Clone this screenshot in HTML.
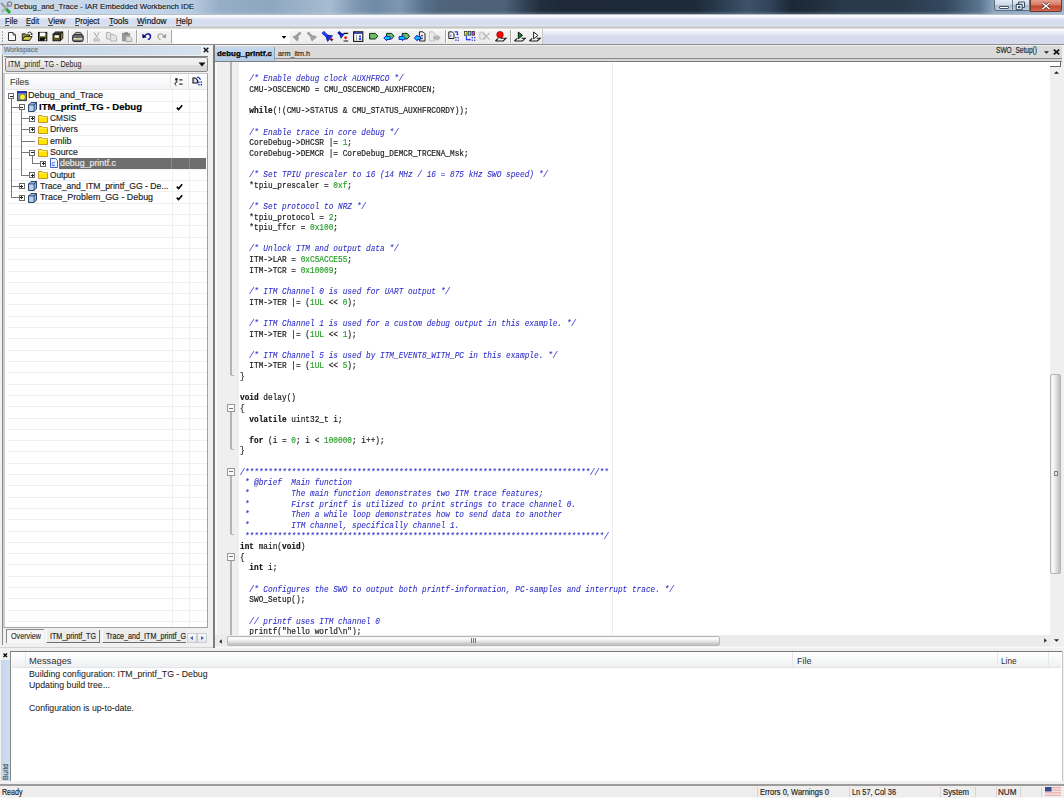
<!DOCTYPE html>
<html><head><meta charset="utf-8"><style>
html,body{margin:0;padding:0;}
body{width:1064px;height:798px;overflow:hidden;position:relative;background:#f0f0f0;font-family:'Liberation Sans', sans-serif;}
#t0{transform:scaleX(0.9707);}
#t1{transform:scaleX(0.9019);}
#t2{transform:scaleX(0.8776);}
#t3{transform:scaleX(0.9467);}
#t4{transform:scaleX(0.9159);}
#t5{transform:scaleX(0.9720);}
#t6{transform:scaleX(0.9647);}
#t7{transform:scaleX(0.9046);}
#t8{transform:scaleX(0.8984);}
#t9{transform:scaleX(0.8731);}
#t10{transform:scaleX(1.0742);}
#t11{transform:scaleX(1.0582);}
#t12{transform:scaleX(1.1120);}
#t13{transform:scaleX(0.9699);}
#t14{transform:scaleX(1.0214);}
#t15{transform:scaleX(1.0415);}
#t16{transform:scaleX(1.0208);}
#t17{transform:scaleX(0.9569);}
#t18{transform:scaleX(1.0281);}
#t19{transform:scaleX(1.0026);}
#t20{transform:scaleX(1.0315);}
#t21{transform:scaleX(0.8791);}
#t22{transform:scaleX(0.8715);}
#t23{transform:scaleX(0.8775);}
#t24{transform:scaleX(1.0156);}
#t25{transform:scaleX(0.8998);}
#t26{transform:scaleX(0.8044);}
#t27{transform:scaleX(1.0600);}
#t28{transform:scaleX(1.0220);}
#t29{transform:scaleX(0.9315);}
#t30{transform:scaleX(0.9947);}
#t31{transform:scaleX(0.9977);}
#t32{transform:scaleX(0.9894);}
#t33{transform:scaleX(0.8465);}
#t34{transform:scaleX(0.9021);}
#t35{transform:scaleX(0.8830);}
#t36{transform:scaleX(0.9306);}
#t37{transform:scaleX(0.9697);}
</style></head><body>
<div style="position:absolute;left:0px;top:0px;width:1064px;height:14px;background:linear-gradient(90deg,#c8d9ec 0px,#c2d5e9 150px,#b4c8de 195px,#95adc6 220px,#8ea7c0 270px,#a7bcd2 330px,#7e98b2 355px,#6f8aa6 375px,#7d97b1 400px,#56708b 425px,#4f647b 440px,#4c6178 505px,#34465a 522px,#222f3f 540px,#1d2938 560px,#1d2a38 695px,#2b3d51 722px,#3d5268 747px,#30435a 770px,#1c2836 792px,#202d3c 812px,#2a3a4c 845px,#2a3a4c 900px,#34485e 945px,#5a7590 980px,#8aa4bc 994px,#9ab2c8 1064px);"></div>
<div style="position:absolute;left:0px;top:11px;width:1064px;height:3px;background:linear-gradient(180deg,rgba(255,255,255,0.0),rgba(200,215,230,0.25));"></div>
<svg style="position:absolute;left:0;top:1px" width="13" height="13" viewBox="0 0 13 13"><path d="M1 2 L10 11" stroke="#9a9a9a" stroke-width="2.2"/><path d="M2 11 L9 3" stroke="#b0b0b0" stroke-width="2"/><circle cx="9.5" cy="3" r="2.2" fill="none" stroke="#888" stroke-width="1.3"/><path d="M6 8 L10 12" stroke="#1faa2a" stroke-width="2.6"/></svg>
<span id="t0" style="position:absolute;left:14px;top:3.00px;font-family:'Liberation Sans', sans-serif;font-size:8px;line-height:8px;color:#1a1a1a;font-weight:normal;white-space:pre;transform-origin:0 0;-webkit-text-stroke:0.15px currentColor;text-shadow:0 0 3px rgba(255,255,255,0.6);">Debug_and_Trace - IAR Embedded Workbench IDE</span>
<div style="position:absolute;left:994px;top:0;width:36px;height:11px;border:1px solid #5f6f82;border-top:none;border-radius:0 0 0 3px;background:linear-gradient(180deg,#e2ebf6 0%,#cfdcea 45%,#a9bcd2 55%,#bfd0e2 100%);box-sizing:border-box;"></div>
<div style="position:absolute;left:1012px;top:0px;width:1px;height:11px;background:#6a7a8c;"></div>
<div style="position:absolute;left:999px;top:5.6px;width:8px;height:1.6px;background:#fff;border:0.8px solid #44546a;box-sizing:content-box;border-radius:1px;"></div>
<svg style="position:absolute;left:1015px;top:1px" width="11" height="10" viewBox="0 0 11 10"><rect x="3.5" y="1" width="6" height="5.5" fill="#f0f4f8" stroke="#3a4a5e" stroke-width="1.1" rx="0.8"/><rect x="1.2" y="3.4" width="6" height="5.5" fill="#f0f4f8" stroke="#3a4a5e" stroke-width="1.1" rx="0.8"/><rect x="3" y="5" width="2.4" height="2.2" fill="#3a4a5e"/></svg>
<div style="position:absolute;left:1030px;top:0;width:31.5px;height:11.5px;border:1px solid #6a3a30;border-top:none;border-radius:0 0 3px 0;background:linear-gradient(180deg,#e7a090 0%,#d77a66 45%,#c3442c 55%,#d4674e 100%);box-sizing:border-box;"></div>
<svg style="position:absolute;left:1041px;top:1.5px" width="10" height="8" viewBox="0 0 10 8"><path d="M1.5 1 L8.5 7 M8.5 1 L1.5 7" stroke="#4a2a24" stroke-width="2.8"/><path d="M1.5 1 L8.5 7 M8.5 1 L1.5 7" stroke="#fff" stroke-width="1.6"/></svg>
<div style="position:absolute;left:0px;top:14px;width:1064px;height:15px;background:linear-gradient(180deg,#8a96a2 0px,#f4f6fa 1.2px,#ffffff 1.8px,#eef1f8 3.5px,#d8dff0 5.5px,#d6ddef 10.5px,#e2e7f4 11.5px,#cccccc 12.6px,#c8c8c8 14.2px,#f8f9fc 15px);"></div>
<span id="t1" style="position:absolute;left:4.5px;top:16.59px;font-family:'Liberation Sans', sans-serif;font-size:8.6px;line-height:8.6px;color:#141414;font-weight:normal;white-space:pre;transform-origin:0 0;-webkit-text-stroke:0.15px currentColor;">File</span>
<span id="t2" style="position:absolute;left:26px;top:16.59px;font-family:'Liberation Sans', sans-serif;font-size:8.6px;line-height:8.6px;color:#141414;font-weight:normal;white-space:pre;transform-origin:0 0;-webkit-text-stroke:0.15px currentColor;">Edit</span>
<span id="t3" style="position:absolute;left:48px;top:16.59px;font-family:'Liberation Sans', sans-serif;font-size:8.6px;line-height:8.6px;color:#141414;font-weight:normal;white-space:pre;transform-origin:0 0;-webkit-text-stroke:0.15px currentColor;">View</span>
<span id="t4" style="position:absolute;left:74.5px;top:16.59px;font-family:'Liberation Sans', sans-serif;font-size:8.6px;line-height:8.6px;color:#141414;font-weight:normal;white-space:pre;transform-origin:0 0;-webkit-text-stroke:0.15px currentColor;">Project</span>
<span id="t5" style="position:absolute;left:108.5px;top:16.59px;font-family:'Liberation Sans', sans-serif;font-size:8.6px;line-height:8.6px;color:#141414;font-weight:normal;white-space:pre;transform-origin:0 0;-webkit-text-stroke:0.15px currentColor;">Tools</span>
<span id="t6" style="position:absolute;left:137px;top:16.59px;font-family:'Liberation Sans', sans-serif;font-size:8.6px;line-height:8.6px;color:#141414;font-weight:normal;white-space:pre;transform-origin:0 0;-webkit-text-stroke:0.15px currentColor;">Window</span>
<span id="t7" style="position:absolute;left:176px;top:16.59px;font-family:'Liberation Sans', sans-serif;font-size:8.6px;line-height:8.6px;color:#141414;font-weight:normal;white-space:pre;transform-origin:0 0;-webkit-text-stroke:0.15px currentColor;">Help</span>
<div style="position:absolute;left:5px;top:24.8px;width:3.5px;height:0.9px;background:#505050;"></div>
<div style="position:absolute;left:26.3px;top:24.8px;width:4px;height:0.9px;background:#505050;"></div>
<div style="position:absolute;left:48.3px;top:24.8px;width:4.5px;height:0.9px;background:#505050;"></div>
<div style="position:absolute;left:75px;top:24.8px;width:4px;height:0.9px;background:#505050;"></div>
<div style="position:absolute;left:108.8px;top:24.8px;width:4px;height:0.9px;background:#505050;"></div>
<div style="position:absolute;left:137.3px;top:24.8px;width:6px;height:0.9px;background:#505050;"></div>
<div style="position:absolute;left:176.3px;top:24.8px;width:4.5px;height:0.9px;background:#505050;"></div>
<div style="position:absolute;left:0px;top:29px;width:1064px;height:15px;background:linear-gradient(180deg,#fdfdfe 0px,#f4f6fb 2px,#dde2f1 6px,#d5daec 8px,#d5daec 15px);"></div>
<div style="position:absolute;left:0px;top:29px;width:543px;height:15px;background:linear-gradient(180deg,#fdfdfd 0px,#f3f3f3 3px,#efefef 12px,#e8e8e8 15px);"></div>
<div style="position:absolute;left:542px;top:29px;width:1px;height:15px;background:#c6c6c6;"></div>
<div style="position:absolute;left:1.5px;top:31px;width:1.5px;height:1.5px;background:#a0a8b8;"></div>
<div style="position:absolute;left:1.5px;top:34px;width:1.5px;height:1.5px;background:#a0a8b8;"></div>
<div style="position:absolute;left:1.5px;top:37px;width:1.5px;height:1.5px;background:#a0a8b8;"></div>
<div style="position:absolute;left:1.5px;top:40px;width:1.5px;height:1.5px;background:#a0a8b8;"></div>
<div style="position:absolute;left:67.5px;top:30px;width:1px;height:12.5px;background:#a8a8a8;"></div>
<div style="position:absolute;left:68.5px;top:30px;width:1px;height:12.5px;background:#ffffff;"></div>
<div style="position:absolute;left:86.5px;top:30px;width:1px;height:12.5px;background:#a8a8a8;"></div>
<div style="position:absolute;left:87.5px;top:30px;width:1px;height:12.5px;background:#ffffff;"></div>
<div style="position:absolute;left:136px;top:30px;width:1px;height:12.5px;background:#a8a8a8;"></div>
<div style="position:absolute;left:137px;top:30px;width:1px;height:12.5px;background:#ffffff;"></div>
<div style="position:absolute;left:171px;top:30px;width:1px;height:12.5px;background:#a8a8a8;"></div>
<div style="position:absolute;left:172px;top:30px;width:1px;height:12.5px;background:#ffffff;"></div>
<div style="position:absolute;left:444.5px;top:30px;width:1px;height:12.5px;background:#a8a8a8;"></div>
<div style="position:absolute;left:445.5px;top:30px;width:1px;height:12.5px;background:#ffffff;"></div>
<div style="position:absolute;left:509.5px;top:30px;width:1px;height:12.5px;background:#a8a8a8;"></div>
<div style="position:absolute;left:510.5px;top:30px;width:1px;height:12.5px;background:#ffffff;"></div>
<div style="position:absolute;left:0px;top:44px;width:1064px;height:1px;background:#8c8c8c;"></div>
<div style="position:absolute;left:0px;top:45px;width:213px;height:602px;background:#f0f0f0;"></div>
<div style="position:absolute;left:2px;top:45px;width:1.3px;height:600px;background:#8a8a8a;"></div>
<div style="position:absolute;left:0px;top:646.6px;width:213.3px;height:1.4px;background:#d2d2d2;"></div>
<div style="position:absolute;left:2px;top:46px;width:199px;height:8.5px;background:linear-gradient(90deg,#c6d7e9,#cddbea 60%,#d6e2ef);"></div>
<div style="position:absolute;left:201px;top:46px;width:7px;height:8.5px;background:#eef2f6;"></div>
<span id="t8" style="position:absolute;left:4px;top:46.14px;font-family:'Liberation Sans', sans-serif;font-size:7.6px;line-height:7.6px;color:#707070;font-weight:normal;white-space:pre;transform-origin:0 0;-webkit-text-stroke:0.15px currentColor;">Workspace</span>
<svg style="position:absolute;left:203px;top:47px" width="6" height="6" viewBox="0 0 6 6"><path d="M0.7 0.7 L5.3 5.3 M5.3 0.7 L0.7 5.3" stroke="#111" stroke-width="1.4"/></svg>
<div style="position:absolute;left:4px;top:55.5px;width:204px;height:1px;background:#808080;"></div>
<div style="position:absolute;left:5px;top:57px;width:203px;height:15px;box-sizing:border-box;border:1px solid #8a8a8a;border-radius:2px;background:linear-gradient(180deg,#f4f4f4 0%,#ececec 50%,#dedede 51%,#d6d6d6 100%);"></div>
<span id="t9" style="position:absolute;left:7.5px;top:61.03px;font-family:'Liberation Sans', sans-serif;font-size:8.2px;line-height:8.2px;color:#1a1a1a;font-weight:normal;white-space:pre;transform-origin:0 0;-webkit-text-stroke:0.15px currentColor;-webkit-text-stroke:0;">ITM_printf_TG - Debug</span>
<svg style="position:absolute;left:198px;top:62px" width="8" height="5" viewBox="0 0 8 5"><path d="M0.5 0.5 L7.5 0.5 L4 4.5 Z" fill="#111"/></svg>
<div style="position:absolute;left:3.3px;top:72.5px;width:204.7px;height:555px;background:#fff;border:1px solid #a0a0a0;border-left:2.7px solid #c8ccd4;border-top:1px solid #c8c8c8;box-sizing:border-box;"></div>
<div style="position:absolute;left:6px;top:73.5px;width:201px;height:16px;background:linear-gradient(180deg,#ffffff,#f3f4f6);border-bottom:1px solid #e4e6ea;box-sizing:border-box;"></div>
<div style="position:absolute;left:170.2px;top:73.5px;width:1px;height:16px;background:#e6e6e6;"></div>
<div style="position:absolute;left:188.1px;top:73.5px;width:1px;height:16px;background:#e6e6e6;"></div>
<span id="t10" style="position:absolute;left:10px;top:78.36px;font-family:'Liberation Sans', sans-serif;font-size:8.4px;line-height:8.4px;color:#4a4a4a;font-weight:normal;white-space:pre;transform-origin:0 0;-webkit-text-stroke:0.15px currentColor;">Files</span>
<svg style="position:absolute;left:168px;top:72px" width="40" height="20" viewBox="168 72 40 20"><circle cx="176.4" cy="79.4" r="1.3" fill="#222"/><path d="M176.4 80.6 V81.6 M177.6 81.8 Q175 81.8 174.8 84.2 L176.4 85.6" fill="none" stroke="#222" stroke-width="1"/><path d="M179.2 79.8 H182.6 M179.2 84.2 H182.6" stroke="#333" stroke-width="1.2"/><path d="M193 78 H195.6 L197.6 80.4 V83 H193 Z" fill="#d8d8f0" stroke="#111" stroke-width="1.1"/><path d="M197 77.3 H198.6 L200.6 79.6" fill="none" stroke="#1a2ae0" stroke-width="1.3"/><rect x="198.2" y="81.4" width="1.4" height="1.5" fill="#2a3ac0"/><rect x="200.6" y="81.4" width="1.4" height="1.5" fill="#2a3ac0"/><rect x="198.2" y="84" width="1.4" height="1.5" fill="#2a3ac0"/><rect x="200.6" y="84" width="1.4" height="1.5" fill="#2a3ac0"/></svg>
<div style="position:absolute;left:7px;top:101.0px;width:200px;height:1px;background:#f0f0f0;"></div>
<div style="position:absolute;left:7px;top:112.3px;width:200px;height:1px;background:#f0f0f0;"></div>
<div style="position:absolute;left:7px;top:123.61px;width:200px;height:1px;background:#f0f0f0;"></div>
<div style="position:absolute;left:7px;top:134.91px;width:200px;height:1px;background:#f0f0f0;"></div>
<div style="position:absolute;left:7px;top:146.22px;width:200px;height:1px;background:#f0f0f0;"></div>
<div style="position:absolute;left:7px;top:157.52px;width:200px;height:1px;background:#f0f0f0;"></div>
<div style="position:absolute;left:7px;top:168.82px;width:200px;height:1px;background:#f0f0f0;"></div>
<div style="position:absolute;left:7px;top:180.13px;width:200px;height:1px;background:#f0f0f0;"></div>
<div style="position:absolute;left:7px;top:191.43px;width:200px;height:1px;background:#f0f0f0;"></div>
<div style="position:absolute;left:7px;top:202.74px;width:200px;height:1px;background:#f0f0f0;"></div>
<div style="position:absolute;left:7px;top:214.04px;width:200px;height:1px;background:#f0f0f0;"></div>
<div style="position:absolute;left:7px;top:225.34px;width:200px;height:1px;background:#f0f0f0;"></div>
<div style="position:absolute;left:7px;top:236.65px;width:200px;height:1px;background:#f0f0f0;"></div>
<div style="position:absolute;left:7px;top:247.95px;width:200px;height:1px;background:#f0f0f0;"></div>
<div style="position:absolute;left:7px;top:259.26px;width:200px;height:1px;background:#f0f0f0;"></div>
<div style="position:absolute;left:7px;top:270.56px;width:200px;height:1px;background:#f0f0f0;"></div>
<div style="position:absolute;left:7px;top:281.86px;width:200px;height:1px;background:#f0f0f0;"></div>
<div style="position:absolute;left:7px;top:293.17px;width:200px;height:1px;background:#f0f0f0;"></div>
<div style="position:absolute;left:7px;top:304.47px;width:200px;height:1px;background:#f0f0f0;"></div>
<div style="position:absolute;left:7px;top:315.78px;width:200px;height:1px;background:#f0f0f0;"></div>
<div style="position:absolute;left:7px;top:327.08px;width:200px;height:1px;background:#f0f0f0;"></div>
<div style="position:absolute;left:7px;top:338.38px;width:200px;height:1px;background:#f0f0f0;"></div>
<div style="position:absolute;left:7px;top:349.69px;width:200px;height:1px;background:#f0f0f0;"></div>
<div style="position:absolute;left:7px;top:360.99px;width:200px;height:1px;background:#f0f0f0;"></div>
<div style="position:absolute;left:7px;top:372.3px;width:200px;height:1px;background:#f0f0f0;"></div>
<div style="position:absolute;left:7px;top:383.6px;width:200px;height:1px;background:#f0f0f0;"></div>
<div style="position:absolute;left:7px;top:394.9px;width:200px;height:1px;background:#f0f0f0;"></div>
<div style="position:absolute;left:7px;top:406.21px;width:200px;height:1px;background:#f0f0f0;"></div>
<div style="position:absolute;left:7px;top:417.51px;width:200px;height:1px;background:#f0f0f0;"></div>
<div style="position:absolute;left:7px;top:428.82px;width:200px;height:1px;background:#f0f0f0;"></div>
<div style="position:absolute;left:7px;top:440.12px;width:200px;height:1px;background:#f0f0f0;"></div>
<div style="position:absolute;left:7px;top:451.42px;width:200px;height:1px;background:#f0f0f0;"></div>
<div style="position:absolute;left:7px;top:462.73px;width:200px;height:1px;background:#f0f0f0;"></div>
<div style="position:absolute;left:7px;top:474.03px;width:200px;height:1px;background:#f0f0f0;"></div>
<div style="position:absolute;left:7px;top:485.34px;width:200px;height:1px;background:#f0f0f0;"></div>
<div style="position:absolute;left:7px;top:496.64px;width:200px;height:1px;background:#f0f0f0;"></div>
<div style="position:absolute;left:7px;top:507.94px;width:200px;height:1px;background:#f0f0f0;"></div>
<div style="position:absolute;left:7px;top:519.25px;width:200px;height:1px;background:#f0f0f0;"></div>
<div style="position:absolute;left:7px;top:530.55px;width:200px;height:1px;background:#f0f0f0;"></div>
<div style="position:absolute;left:7px;top:541.86px;width:200px;height:1px;background:#f0f0f0;"></div>
<div style="position:absolute;left:7px;top:553.16px;width:200px;height:1px;background:#f0f0f0;"></div>
<div style="position:absolute;left:7px;top:564.46px;width:200px;height:1px;background:#f0f0f0;"></div>
<div style="position:absolute;left:7px;top:575.77px;width:200px;height:1px;background:#f0f0f0;"></div>
<div style="position:absolute;left:7px;top:587.07px;width:200px;height:1px;background:#f0f0f0;"></div>
<div style="position:absolute;left:7px;top:598.38px;width:200px;height:1px;background:#f0f0f0;"></div>
<div style="position:absolute;left:7px;top:609.68px;width:200px;height:1px;background:#f0f0f0;"></div>
<div style="position:absolute;left:7px;top:620.98px;width:200px;height:1px;background:#f0f0f0;"></div>
<div style="position:absolute;left:171.5px;top:89.5px;width:1px;height:537px;background:#f0f0f0;"></div>
<div style="position:absolute;left:189px;top:89.5px;width:1px;height:537px;background:#f0f0f0;"></div>
<div style="position:absolute;left:10.5px;top:99.0px;width:1px;height:99.24px;background:#7a7a7a;"></div>
<div style="position:absolute;left:21px;top:110.3px;width:1px;height:65.32px;background:#7a7a7a;"></div>
<div style="position:absolute;left:31.5px;top:155.52px;width:1px;height:8.8px;background:#7a7a7a;"></div>
<div style="position:absolute;left:11px;top:106.8px;width:7.5px;height:1px;background:#7a7a7a;"></div>
<div style="position:absolute;left:11px;top:185.93px;width:7.5px;height:1px;background:#7a7a7a;"></div>
<div style="position:absolute;left:11px;top:197.24px;width:7.5px;height:1px;background:#7a7a7a;"></div>
<div style="position:absolute;left:21.5px;top:118.11px;width:8.0px;height:1px;background:#7a7a7a;"></div>
<div style="position:absolute;left:21.5px;top:129.41px;width:8.0px;height:1px;background:#7a7a7a;"></div>
<div style="position:absolute;left:21.5px;top:140.72px;width:13.5px;height:1px;background:#7a7a7a;"></div>
<div style="position:absolute;left:21.5px;top:152.02px;width:8.0px;height:1px;background:#7a7a7a;"></div>
<div style="position:absolute;left:21.5px;top:174.63px;width:8.0px;height:1px;background:#7a7a7a;"></div>
<div style="position:absolute;left:32px;top:163.32px;width:8px;height:1px;background:#7a7a7a;"></div>
<div style="position:absolute;left:8px;top:93.00px;width:6px;height:6px;box-sizing:border-box;border:1px solid #6a6a6a;background:#fff;"></div>
<div style="position:absolute;left:9.5px;top:95.5px;width:3px;height:1px;background:#222;"></div>
<svg style="position:absolute;left:17px;top:90.50px" width="10" height="10" viewBox="0 0 10 10"><rect x="0.5" y="0.5" width="9" height="9" fill="#7090b0" stroke="#333" stroke-width="0.9"/><rect x="0.5" y="0.5" width="9" height="1.6" fill="#1a2ad0"/><circle cx="5.5" cy="6" r="3" fill="#f6f040" stroke="#555" stroke-width="0.6"/></svg>
<span id="t11" style="position:absolute;left:28px;top:91.39px;font-family:'Liberation Sans', sans-serif;font-size:8.6px;line-height:8.6px;color:#222;font-weight:normal;white-space:pre;transform-origin:0 0;-webkit-text-stroke:0.15px currentColor;">Debug_and_Trace</span>
<div style="position:absolute;left:18.5px;top:104.30px;width:6px;height:6px;box-sizing:border-box;border:1px solid #6a6a6a;background:#fff;"></div>
<div style="position:absolute;left:20.0px;top:106.8px;width:3px;height:1px;background:#222;"></div>
<svg style="position:absolute;left:28px;top:102.30px" width="9" height="10" viewBox="0 0 9 10"><path d="M0.5 3 L3 0.5 H8.5 V7 L6 9.5 H0.5 Z" fill="#8fb4dc" stroke="#203860" stroke-width="0.9"/><path d="M0.5 3 H6 V9.5 M6 3 L8.5 0.5" stroke="#203860" stroke-width="0.9" fill="none"/><rect x="1.2" y="3.6" width="4.2" height="5.2" fill="#b8d2ee"/></svg>
<span id="t12" style="position:absolute;left:38.5px;top:102.69px;font-family:'Liberation Sans', sans-serif;font-size:8.6px;line-height:8.6px;color:#000;font-weight:bold;white-space:pre;transform-origin:0 0;-webkit-text-stroke:0.15px currentColor;">ITM_printf_TG - Debug</span>
<svg style="position:absolute;left:176px;top:103.80px" width="7" height="7" viewBox="0 0 7 7"><path d="M0.8 3.6 L2.6 5.6 L6.2 1.2" stroke="#000" stroke-width="1.6" fill="none"/></svg>
<div style="position:absolute;left:29.2px;top:115.61px;width:6px;height:6px;box-sizing:border-box;border:1px solid #6a6a6a;background:#fff;"></div>
<div style="position:absolute;left:30.7px;top:118.11px;width:3px;height:1px;background:#222;"></div>
<div style="position:absolute;left:31.7px;top:117.11px;width:1px;height:3px;background:#222;"></div>
<svg style="position:absolute;left:38px;top:113.61px" width="10" height="9" viewBox="0 0 10 9"><path d="M0.5 1.5 H4 L5 2.5 H9.5 V8.5 H0.5 Z" fill="#ffe400" stroke="#c08a20" stroke-width="0.9"/><path d="M0.8 3.2 H9.2" stroke="#fff7a0" stroke-width="0.8"/></svg>
<span id="t13" style="position:absolute;left:49.6px;top:114.00px;font-family:'Liberation Sans', sans-serif;font-size:8.6px;line-height:8.6px;color:#222;font-weight:normal;white-space:pre;transform-origin:0 0;-webkit-text-stroke:0.15px currentColor;">CMSIS</span>
<div style="position:absolute;left:29.2px;top:126.91px;width:6px;height:6px;box-sizing:border-box;border:1px solid #6a6a6a;background:#fff;"></div>
<div style="position:absolute;left:30.7px;top:129.41px;width:3px;height:1px;background:#222;"></div>
<div style="position:absolute;left:31.7px;top:128.41px;width:1px;height:3px;background:#222;"></div>
<svg style="position:absolute;left:38px;top:124.91px" width="10" height="9" viewBox="0 0 10 9"><path d="M0.5 1.5 H4 L5 2.5 H9.5 V8.5 H0.5 Z" fill="#ffe400" stroke="#c08a20" stroke-width="0.9"/><path d="M0.8 3.2 H9.2" stroke="#fff7a0" stroke-width="0.8"/></svg>
<span id="t14" style="position:absolute;left:49.6px;top:125.30px;font-family:'Liberation Sans', sans-serif;font-size:8.6px;line-height:8.6px;color:#222;font-weight:normal;white-space:pre;transform-origin:0 0;-webkit-text-stroke:0.15px currentColor;">Drivers</span>
<svg style="position:absolute;left:38px;top:136.22px" width="10" height="9" viewBox="0 0 10 9"><path d="M0.5 1.5 H4 L5 2.5 H9.5 V8.5 H0.5 Z" fill="#ffe400" stroke="#c08a20" stroke-width="0.9"/><path d="M0.8 3.2 H9.2" stroke="#fff7a0" stroke-width="0.8"/></svg>
<span id="t15" style="position:absolute;left:49.6px;top:136.61px;font-family:'Liberation Sans', sans-serif;font-size:8.6px;line-height:8.6px;color:#222;font-weight:normal;white-space:pre;transform-origin:0 0;-webkit-text-stroke:0.15px currentColor;">emlib</span>
<div style="position:absolute;left:29.2px;top:149.52px;width:6px;height:6px;box-sizing:border-box;border:1px solid #6a6a6a;background:#fff;"></div>
<div style="position:absolute;left:30.7px;top:152.02px;width:3px;height:1px;background:#222;"></div>
<svg style="position:absolute;left:38px;top:147.52px" width="10" height="9" viewBox="0 0 10 9"><path d="M0.5 1.5 H4 L5 2.5 H9.5 V8.5 H0.5 Z" fill="#ffe400" stroke="#c08a20" stroke-width="0.9"/><path d="M0.8 3.2 H9.2" stroke="#fff7a0" stroke-width="0.8"/></svg>
<span id="t16" style="position:absolute;left:49.6px;top:147.91px;font-family:'Liberation Sans', sans-serif;font-size:8.6px;line-height:8.6px;color:#222;font-weight:normal;white-space:pre;transform-origin:0 0;-webkit-text-stroke:0.15px currentColor;">Source</span>
<div style="position:absolute;left:29.2px;top:172.13px;width:6px;height:6px;box-sizing:border-box;border:1px solid #6a6a6a;background:#fff;"></div>
<div style="position:absolute;left:30.7px;top:174.63px;width:3px;height:1px;background:#222;"></div>
<div style="position:absolute;left:31.7px;top:173.63px;width:1px;height:3px;background:#222;"></div>
<svg style="position:absolute;left:38px;top:170.13px" width="10" height="9" viewBox="0 0 10 9"><path d="M0.5 1.5 H4 L5 2.5 H9.5 V8.5 H0.5 Z" fill="#ffe400" stroke="#c08a20" stroke-width="0.9"/><path d="M0.8 3.2 H9.2" stroke="#fff7a0" stroke-width="0.8"/></svg>
<span id="t17" style="position:absolute;left:49.6px;top:170.52px;font-family:'Liberation Sans', sans-serif;font-size:8.6px;line-height:8.6px;color:#222;font-weight:normal;white-space:pre;transform-origin:0 0;-webkit-text-stroke:0.15px currentColor;">Output</span>
<div style="position:absolute;left:59.4px;top:158.2px;width:146.6px;height:10.4px;background:#6e6e6e;"></div>
<div style="position:absolute;left:171.2px;top:158.2px;width:1px;height:10.4px;background:#8a8a8a;"></div>
<div style="position:absolute;left:189.2px;top:158.2px;width:1px;height:10.4px;background:#8a8a8a;"></div>
<div style="position:absolute;left:40px;top:160.82px;width:6px;height:6px;box-sizing:border-box;border:1px solid #6a6a6a;background:#fff;"></div>
<div style="position:absolute;left:41.5px;top:163.32px;width:3px;height:1px;background:#222;"></div>
<div style="position:absolute;left:42.5px;top:162.32px;width:1px;height:3px;background:#222;"></div>
<svg style="position:absolute;left:49.5px;top:158.32px" width="8" height="10" viewBox="0 0 8 10"><path d="M0.5 0.5 H5.5 L7.5 2.5 V9.5 H0.5 Z" fill="#eef4ff" stroke="#2a50c0" stroke-width="0.9"/><text x="1.6" y="8.2" font-family="Liberation Sans" font-size="7" fill="#1030ff">c</text></svg>
<span id="t18" style="position:absolute;left:60px;top:159.21px;font-family:'Liberation Sans', sans-serif;font-size:8.6px;line-height:8.6px;color:#ececec;font-weight:normal;white-space:pre;transform-origin:0 0;-webkit-text-stroke:0.15px currentColor;">debug_printf.c</span>
<div style="position:absolute;left:18.5px;top:183.43px;width:6px;height:6px;box-sizing:border-box;border:1px solid #6a6a6a;background:#fff;"></div>
<div style="position:absolute;left:20.0px;top:185.93px;width:3px;height:1px;background:#222;"></div>
<div style="position:absolute;left:21.0px;top:184.93px;width:1px;height:3px;background:#222;"></div>
<svg style="position:absolute;left:28px;top:181.43px" width="9" height="10" viewBox="0 0 9 10"><path d="M0.5 3 L3 0.5 H8.5 V7 L6 9.5 H0.5 Z" fill="#8fb4dc" stroke="#203860" stroke-width="0.9"/><path d="M0.5 3 H6 V9.5 M6 3 L8.5 0.5" stroke="#203860" stroke-width="0.9" fill="none"/><rect x="1.2" y="3.6" width="4.2" height="5.2" fill="#b8d2ee"/></svg>
<span id="t19" style="position:absolute;left:39.5px;top:181.82px;font-family:'Liberation Sans', sans-serif;font-size:8.6px;line-height:8.6px;color:#222;font-weight:normal;white-space:pre;transform-origin:0 0;-webkit-text-stroke:0.15px currentColor;">Trace_and_ITM_printf_GG - De...</span>
<svg style="position:absolute;left:176px;top:182.93px" width="7" height="7" viewBox="0 0 7 7"><path d="M0.8 3.6 L2.6 5.6 L6.2 1.2" stroke="#000" stroke-width="1.6" fill="none"/></svg>
<div style="position:absolute;left:18.5px;top:194.74px;width:6px;height:6px;box-sizing:border-box;border:1px solid #6a6a6a;background:#fff;"></div>
<div style="position:absolute;left:20.0px;top:197.24px;width:3px;height:1px;background:#222;"></div>
<div style="position:absolute;left:21.0px;top:196.24px;width:1px;height:3px;background:#222;"></div>
<svg style="position:absolute;left:28px;top:192.74px" width="9" height="10" viewBox="0 0 9 10"><path d="M0.5 3 L3 0.5 H8.5 V7 L6 9.5 H0.5 Z" fill="#8fb4dc" stroke="#203860" stroke-width="0.9"/><path d="M0.5 3 H6 V9.5 M6 3 L8.5 0.5" stroke="#203860" stroke-width="0.9" fill="none"/><rect x="1.2" y="3.6" width="4.2" height="5.2" fill="#b8d2ee"/></svg>
<span id="t20" style="position:absolute;left:39.5px;top:193.13px;font-family:'Liberation Sans', sans-serif;font-size:8.6px;line-height:8.6px;color:#222;font-weight:normal;white-space:pre;transform-origin:0 0;-webkit-text-stroke:0.15px currentColor;">Trace_Problem_GG - Debug</span>
<svg style="position:absolute;left:176px;top:194.24px" width="7" height="7" viewBox="0 0 7 7"><path d="M0.8 3.6 L2.6 5.6 L6.2 1.2" stroke="#000" stroke-width="1.6" fill="none"/></svg>
<div style="position:absolute;left:5px;top:627px;width:203px;height:1px;background:#a0a0a8;"></div>
<div style="position:absolute;left:6px;top:628.5px;width:37.5px;height:14px;box-sizing:border-box;border-left:1px solid #8a8a8a;border-top:1px solid #8a8a8a;background:#f7f7f7;"></div>
<span id="t21" style="position:absolute;left:10.5px;top:632.93px;font-family:'Liberation Sans', sans-serif;font-size:8.2px;line-height:8.2px;color:#333;font-weight:normal;white-space:pre;transform-origin:0 0;-webkit-text-stroke:0.15px currentColor;">Overview</span>
<div style="position:absolute;left:46px;top:629.5px;width:53.5px;height:13.5px;box-sizing:border-box;border-right:1.5px solid #707070;border-bottom:1.5px solid #707070;border-left:1px solid #fff;background:#ececec;"></div>
<span id="t22" style="position:absolute;left:50px;top:633.23px;font-family:'Liberation Sans', sans-serif;font-size:8.2px;line-height:8.2px;color:#222;font-weight:normal;white-space:pre;transform-origin:0 0;-webkit-text-stroke:0.15px currentColor;">ITM_printf_TG</span>
<div style="position:absolute;left:102px;top:629.5px;width:84px;height:13.5px;box-sizing:border-box;border-bottom:1.5px solid #707070;border-left:1px solid #fff;background:#ececec;overflow:hidden;"></div>
<span id="t23" style="position:absolute;left:106px;top:633.23px;font-family:'Liberation Sans', sans-serif;font-size:8.2px;line-height:8.2px;color:#222;font-weight:normal;white-space:pre;transform-origin:0 0;-webkit-text-stroke:0.15px currentColor;">Trace_and_ITM_printf_G</span>
<div style="position:absolute;left:185.5px;top:629.5px;width:22px;height:13.5px;background:#f0f0f0;"></div>
<div style="position:absolute;left:186.5px;top:632.5px;width:10px;height:10px;box-sizing:border-box;border:1px solid #c8ccd4;background:linear-gradient(180deg,#f8f8f8,#e6e6e6);"></div>
<svg style="position:absolute;left:190.0px;top:635.8px" width="3" height="4" viewBox="0 0 3 4"><path d="M3 0 L0 2 L3 4 Z" fill="#4a64b8"/></svg>
<div style="position:absolute;left:197px;top:632.5px;width:10px;height:10px;box-sizing:border-box;border:1px solid #c8ccd4;background:linear-gradient(180deg,#f8f8f8,#e6e6e6);"></div>
<svg style="position:absolute;left:200.5px;top:635.8px" width="3" height="4" viewBox="0 0 3 4"><path d="M0 0 L3 2 L0 4 Z" fill="#4a64b8"/></svg>
<div style="position:absolute;left:213px;top:44.5px;width:851px;height:603px;background:#f0f0f0;"></div>
<div style="position:absolute;left:213.3px;top:44.5px;width:2px;height:603px;background:#7c7c7c;"></div>
<div style="position:absolute;left:215.3px;top:45.5px;width:848.7px;height:13px;background:#dadada;"></div>
<div style="position:absolute;left:215.3px;top:58.2px;width:848.7px;height:1px;background:#8a8a8a;"></div>
<div style="position:absolute;left:215.3px;top:59.2px;width:848.7px;height:2px;background:#d6d6d6;"></div>
<div style="position:absolute;left:215.3px;top:61px;width:848.7px;height:1px;background:#7e7e7e;"></div>
<div style="position:absolute;left:215.3px;top:46.5px;width:60px;height:14.5px;background:linear-gradient(180deg,#c4d8ee,#b4cce6);border-right:1px solid #8aa0b8;box-sizing:border-box;"></div>
<span id="t24" style="position:absolute;left:217.3px;top:49.97px;font-family:'Liberation Sans', sans-serif;font-size:7.8px;line-height:7.8px;color:#000;font-weight:bold;white-space:pre;transform-origin:0 0;-webkit-text-stroke:0.15px currentColor;-webkit-text-stroke:0.25px #000;">debug_printf.c</span>
<span id="t25" style="position:absolute;left:278px;top:49.80px;font-family:'Liberation Sans', sans-serif;font-size:8.0px;line-height:8.0px;color:#222;font-weight:normal;white-space:pre;transform-origin:0 0;-webkit-text-stroke:0.15px currentColor;">arm_itm.h</span>
<span id="t26" style="position:absolute;left:995.5px;top:47.33px;font-family:'Liberation Sans', sans-serif;font-size:8.2px;line-height:8.2px;color:#222;font-weight:normal;white-space:pre;transform-origin:0 0;-webkit-text-stroke:0.15px currentColor;">SWO_Setup()</span>
<svg style="position:absolute;left:1043.8px;top:50.8px" width="5" height="3" viewBox="0 0 5 3"><path d="M0 0.2 H5 L2.5 2.8 Z" fill="#222"/></svg>
<svg style="position:absolute;left:1053px;top:49.2px" width="7" height="6" viewBox="0 0 7 6"><path d="M0.8 0.6 L6.2 5.4 M6.2 0.6 L0.8 5.4" stroke="#111" stroke-width="1.7"/></svg>
<div style="position:absolute;left:215.3px;top:62px;width:835px;height:573px;background:#fff;"></div>
<div style="position:absolute;left:215.3px;top:62px;width:23.5px;height:573px;background:#efefef;"></div>
<div style="position:absolute;left:215.3px;top:62px;width:1.7px;height:573px;background:#fafafa;"></div>
<div style="position:absolute;left:612px;top:62px;width:1px;height:573px;background:#ececec;"></div>
<div style="position:absolute;left:1050.5px;top:66.5px;width:11.5px;height:578.5px;background:#efefef;"></div>
<div style="position:absolute;left:1050px;top:61px;width:11.3px;height:5.6px;box-sizing:border-box;border:1.5px solid #6a6a6a;border-top:1px solid #7e7e7e;border-left:none;background:#fff"></div>
<svg style="position:absolute;left:1054px;top:71px" width="5" height="3" viewBox="0 0 5 3"><path d="M0 2.8 L2.5 0.2 L5 2.8 Z" fill="#222"/></svg>
<div style="position:absolute;left:1050.3px;top:374px;width:10.7px;height:199.6px;box-sizing:border-box;border:1px solid #b4b4b4;border-radius:2px;background:linear-gradient(90deg,#e8e8e8 0%,#fbfbfb 20%,#e2e2e4 55%,#c8c8cc 85%,#c0c0c4 100%);"></div>
<div style="position:absolute;left:1053.5px;top:470.5px;width:4px;height:5px;box-sizing:border-box;border:0.8px solid #808080;background:#e8e8e8;"></div>
<div style="position:absolute;left:215.3px;top:635px;width:835.2px;height:10.5px;background:#ebebeb;"></div>
<svg style="position:absolute;left:219px;top:638.5px" width="3" height="5" viewBox="0 0 3 5"><path d="M2.8 0.3 L0.2 2.5 L2.8 4.7 Z" fill="#222"/></svg>
<div style="position:absolute;left:227.3px;top:636.3px;width:492.7px;height:9.4px;box-sizing:border-box;border:1px solid #b8b8b8;border-radius:2px;background:linear-gradient(180deg,#f2f2f2 0%,#fdfdfd 20%,#e4e4e6 55%,#c8c8cc 85%,#c2c2c6 100%);"></div>
<div style="position:absolute;left:471px;top:638px;width:0.8px;height:5px;background:#777;"></div>
<div style="position:absolute;left:473px;top:638px;width:0.8px;height:5px;background:#777;"></div>
<div style="position:absolute;left:475px;top:638px;width:0.8px;height:5px;background:#777;"></div>
<svg style="position:absolute;left:1043.5px;top:638.3px" width="3" height="5" viewBox="0 0 3 5"><path d="M0.2 0.3 L2.8 2.5 L0.2 4.7 Z" fill="#222"/></svg>
<svg style="position:absolute;left:1054px;top:639.3px" width="5" height="3" viewBox="0 0 5 3"><path d="M0 0.2 H5 L2.5 2.8 Z" fill="#222"/></svg>
<div style="position:absolute;left:1062px;top:44.5px;width:2px;height:603px;background:#f0f0f0;"></div>
<div style="position:absolute;left:215.3px;top:62px;width:835px;height:573px;overflow:hidden;"><div style="position:absolute;left:24.399999999999977px;top:0;transform:scaleX(0.8839);transform-origin:0 0;font-family:'Liberation Mono', monospace;font-size:8.8px;color:#1c1c1c;-webkit-text-stroke:0.2px currentColor;"><div style="position:absolute;left:0;top:13.41px;white-space:pre;line-height:8.8px">  <span class="cm">/* Enable debug clock AUXHFRCO */</span></div><div style="position:absolute;left:0;top:24.04px;white-space:pre;line-height:8.8px">  CMU-&gt;OSCENCMD = CMU_OSCENCMD_AUXHFRCOEN;</div><div style="position:absolute;left:0;top:34.67px;white-space:pre;line-height:8.8px"></div><div style="position:absolute;left:0;top:45.30px;white-space:pre;line-height:8.8px">  <span class="kw">while</span>(!(CMU-&gt;STATUS &amp; CMU_STATUS_AUXHFRCORDY));</div><div style="position:absolute;left:0;top:55.93px;white-space:pre;line-height:8.8px"></div><div style="position:absolute;left:0;top:66.56px;white-space:pre;line-height:8.8px">  <span class="cm">/* Enable trace in core debug */</span></div><div style="position:absolute;left:0;top:77.19px;white-space:pre;line-height:8.8px">  CoreDebug-&gt;DHCSR |= <span class="nm">1</span>;</div><div style="position:absolute;left:0;top:87.82px;white-space:pre;line-height:8.8px">  CoreDebug-&gt;DEMCR |= CoreDebug_DEMCR_TRCENA_Msk;</div><div style="position:absolute;left:0;top:98.45px;white-space:pre;line-height:8.8px"></div><div style="position:absolute;left:0;top:109.08px;white-space:pre;line-height:8.8px">  <span class="cm">/* Set TPIU prescaler to 16 (14 MHz / 16 = 875 kHz SWO speed) */</span></div><div style="position:absolute;left:0;top:119.71px;white-space:pre;line-height:8.8px">  *tpiu_prescaler = <span class="nm">0xf</span>;</div><div style="position:absolute;left:0;top:130.34px;white-space:pre;line-height:8.8px"></div><div style="position:absolute;left:0;top:140.97px;white-space:pre;line-height:8.8px">  <span class="cm">/* Set protocol to NRZ */</span></div><div style="position:absolute;left:0;top:151.60px;white-space:pre;line-height:8.8px">  *tpiu_protocol = <span class="nm">2</span>;</div><div style="position:absolute;left:0;top:162.23px;white-space:pre;line-height:8.8px">  *tpiu_ffcr = <span class="nm">0x100</span>;</div><div style="position:absolute;left:0;top:172.86px;white-space:pre;line-height:8.8px"></div><div style="position:absolute;left:0;top:183.49px;white-space:pre;line-height:8.8px">  <span class="cm">/* Unlock ITM and output data */</span></div><div style="position:absolute;left:0;top:194.12px;white-space:pre;line-height:8.8px">  ITM-&gt;LAR = <span class="nm">0xC5ACCE55</span>;</div><div style="position:absolute;left:0;top:204.75px;white-space:pre;line-height:8.8px">  ITM-&gt;TCR = <span class="nm">0x10009</span>;</div><div style="position:absolute;left:0;top:215.38px;white-space:pre;line-height:8.8px"></div><div style="position:absolute;left:0;top:226.01px;white-space:pre;line-height:8.8px">  <span class="cm">/* ITM Channel 0 is used for UART output */</span></div><div style="position:absolute;left:0;top:236.64px;white-space:pre;line-height:8.8px">  ITM-&gt;TER |= (<span class="nm">1UL</span> &lt;&lt; <span class="nm">0</span>);</div><div style="position:absolute;left:0;top:247.27px;white-space:pre;line-height:8.8px"></div><div style="position:absolute;left:0;top:257.90px;white-space:pre;line-height:8.8px">  <span class="cm">/* ITM Channel 1 is used for a custom debug output in this example. */</span></div><div style="position:absolute;left:0;top:268.53px;white-space:pre;line-height:8.8px">  ITM-&gt;TER |= (<span class="nm">1UL</span> &lt;&lt; <span class="nm">1</span>);</div><div style="position:absolute;left:0;top:279.16px;white-space:pre;line-height:8.8px"></div><div style="position:absolute;left:0;top:289.79px;white-space:pre;line-height:8.8px">  <span class="cm">/* ITM Channel 5 is used by ITM_EVENT8_WITH_PC in this example. */</span></div><div style="position:absolute;left:0;top:300.42px;white-space:pre;line-height:8.8px">  ITM-&gt;TER |= (<span class="nm">1UL</span> &lt;&lt; <span class="nm">5</span>);</div><div style="position:absolute;left:0;top:311.05px;white-space:pre;line-height:8.8px">}</div><div style="position:absolute;left:0;top:321.68px;white-space:pre;line-height:8.8px"></div><div style="position:absolute;left:0;top:332.31px;white-space:pre;line-height:8.8px"><span class="kw">void</span> delay()</div><div style="position:absolute;left:0;top:342.94px;white-space:pre;line-height:8.8px">{</div><div style="position:absolute;left:0;top:353.57px;white-space:pre;line-height:8.8px">  <span class="kw">volatile</span> uint32_t i;</div><div style="position:absolute;left:0;top:364.20px;white-space:pre;line-height:8.8px"></div><div style="position:absolute;left:0;top:374.83px;white-space:pre;line-height:8.8px">  <span class="kw">for</span> (i = <span class="nm">0</span>; i &lt; <span class="nm">100000</span>; i++);</div><div style="position:absolute;left:0;top:385.46px;white-space:pre;line-height:8.8px">}</div><div style="position:absolute;left:0;top:396.09px;white-space:pre;line-height:8.8px"></div><div style="position:absolute;left:0;top:406.72px;white-space:pre;line-height:8.8px"><span class="cm">/**************************************************************************//**</span></div><div style="position:absolute;left:0;top:417.35px;white-space:pre;line-height:8.8px"><span class="cm"> * @brief  Main function</span></div><div style="position:absolute;left:0;top:427.98px;white-space:pre;line-height:8.8px"><span class="cm"> *         The main function demonstrates two ITM trace features;</span></div><div style="position:absolute;left:0;top:438.61px;white-space:pre;line-height:8.8px"><span class="cm"> *         First printf is utilized to print strings to trace channel 0.</span></div><div style="position:absolute;left:0;top:449.24px;white-space:pre;line-height:8.8px"><span class="cm"> *         Then a while loop demonstrates how to send data to another</span></div><div style="position:absolute;left:0;top:459.87px;white-space:pre;line-height:8.8px"><span class="cm"> *         ITM channel, specifically channel 1.</span></div><div style="position:absolute;left:0;top:470.50px;white-space:pre;line-height:8.8px"><span class="cm"> *****************************************************************************/</span></div><div style="position:absolute;left:0;top:481.13px;white-space:pre;line-height:8.8px"><span class="kw">int</span> main(<span class="kw">void</span>)</div><div style="position:absolute;left:0;top:491.76px;white-space:pre;line-height:8.8px">{</div><div style="position:absolute;left:0;top:502.39px;white-space:pre;line-height:8.8px">  <span class="kw">int</span> i;</div><div style="position:absolute;left:0;top:513.02px;white-space:pre;line-height:8.8px"></div><div style="position:absolute;left:0;top:523.65px;white-space:pre;line-height:8.8px">  <span class="cm">/* Configures the SWO to output both printf-information, PC-samples and interrupt trace. */</span></div><div style="position:absolute;left:0;top:534.28px;white-space:pre;line-height:8.8px">  SWO_Setup();</div><div style="position:absolute;left:0;top:544.91px;white-space:pre;line-height:8.8px"></div><div style="position:absolute;left:0;top:555.54px;white-space:pre;line-height:8.8px">  <span class="cm">// printf uses ITM channel 0</span></div><div style="position:absolute;left:0;top:566.17px;white-space:pre;line-height:8.8px">  printf(&quot;hello world\n&quot;);</div></div></div>
<style>.cm{color:#2c2cc8;font-style:italic;-webkit-text-stroke:0.08px currentColor}.kw{font-weight:bold;color:#101010}.nm{color:#2aa02a}</style>
<div style="position:absolute;left:230.3px;top:62px;width:1.4px;height:313.04px;background:#b4b4b4;"></div>
<div style="position:absolute;left:230.5px;top:375.04px;width:3.5px;height:1px;background:#b4b4b4;"></div>
<div style="position:absolute;left:227px;top:404.33px;width:8px;height:7.5px;box-sizing:border-box;border:1px solid #9a9a9a;background:#fafafa;"></div>
<div style="position:absolute;left:229px;top:407.53px;width:4px;height:1px;background:#777;"></div>
<div style="position:absolute;left:230.3px;top:411.83px;width:1.4px;height:37.62px;background:#b4b4b4;"></div>
<div style="position:absolute;left:230.5px;top:449.45px;width:3.5px;height:1px;background:#b4b4b4;"></div>
<div style="position:absolute;left:227px;top:468.11px;width:8px;height:7.5px;box-sizing:border-box;border:1px solid #9a9a9a;background:#fafafa;"></div>
<div style="position:absolute;left:229px;top:471.31px;width:4px;height:1px;background:#777;"></div>
<div style="position:absolute;left:230.3px;top:475.61px;width:1.4px;height:58.88px;background:#b4b4b4;"></div>
<div style="position:absolute;left:230.5px;top:534.49px;width:3.5px;height:1px;background:#b4b4b4;"></div>
<div style="position:absolute;left:227px;top:553.15px;width:8px;height:7.5px;box-sizing:border-box;border:1px solid #9a9a9a;background:#fafafa;"></div>
<div style="position:absolute;left:229px;top:556.35px;width:4px;height:1px;background:#777;"></div>
<div style="position:absolute;left:230.3px;top:560.65px;width:1.4px;height:74.35px;background:#b4b4b4;"></div>
<div style="position:absolute;left:0px;top:648px;width:1064px;height:150px;background:#f0f0f0;"></div>
<div style="position:absolute;left:215.3px;top:647px;width:848.7px;height:1px;background:#fafafa;"></div>
<svg style="position:absolute;left:1.5px;top:651.6px" width="6.5" height="6.5" viewBox="-1 -1 6.5 6.5"><path d="M0.5 0.5 L4 4 M4 0.5 L0.5 4" stroke="#000" stroke-width="1.3"/></svg>
<div style="position:absolute;left:1px;top:660px;width:8.5px;height:121px;background:linear-gradient(90deg,#c4d6ea,#cfdeee);"></div>
<div style="position:absolute;left:3.2px;top:780.2px;transform:rotate(-90deg) scaleX(0.92);transform-origin:0 0;font-family:'Liberation Sans',sans-serif;font-size:7.9px;line-height:6.6px;color:#4a545e;white-space:pre;-webkit-text-stroke:0.2px #4a545e;">Build</div>
<div style="position:absolute;left:10.3px;top:651px;width:1052px;height:130px;background:#fff;"></div>
<div style="position:absolute;left:10.3px;top:651px;width:1052px;height:1.2px;background:#7a7a7a;"></div>
<div style="position:absolute;left:10.3px;top:651px;width:1.2px;height:130px;background:#858585;"></div>
<div style="position:absolute;left:1061.5px;top:651px;width:1px;height:130px;background:#c8c8c8;"></div>
<div style="position:absolute;left:11.6px;top:652.2px;width:1049.9px;height:15.3px;background:linear-gradient(180deg,#ffffff 0%,#f7f8f9 50%,#eef0f2 100%);"></div>
<div style="position:absolute;left:11.6px;top:667.2px;width:1049.9px;height:1px;background:#e3e5e8;"></div>
<div style="position:absolute;left:24.5px;top:652.2px;width:1px;height:15px;background:#e6e8ea;"></div>
<div style="position:absolute;left:792.2px;top:652.2px;width:1px;height:15px;background:#e6e8ea;"></div>
<div style="position:absolute;left:997.4px;top:652.2px;width:1px;height:15px;background:#e6e8ea;"></div>
<div style="position:absolute;left:1048.2px;top:652.2px;width:1px;height:15px;background:#e6e8ea;"></div>
<span id="t27" style="position:absolute;left:28.5px;top:656.52px;font-family:'Liberation Sans', sans-serif;font-size:8.8px;line-height:8.8px;color:#303030;font-weight:normal;white-space:pre;transform-origin:0 0;-webkit-text-stroke:0.15px currentColor;-webkit-text-stroke:0;">Messages</span>
<span id="t28" style="position:absolute;left:797px;top:656.52px;font-family:'Liberation Sans', sans-serif;font-size:8.8px;line-height:8.8px;color:#303030;font-weight:normal;white-space:pre;transform-origin:0 0;-webkit-text-stroke:0.15px currentColor;-webkit-text-stroke:0;">File</span>
<span id="t29" style="position:absolute;left:1001px;top:656.52px;font-family:'Liberation Sans', sans-serif;font-size:8.8px;line-height:8.8px;color:#303030;font-weight:normal;white-space:pre;transform-origin:0 0;-webkit-text-stroke:0.15px currentColor;-webkit-text-stroke:0;">Line</span>
<span id="t30" style="position:absolute;left:28.5px;top:669.62px;font-family:'Liberation Sans', sans-serif;font-size:8.8px;line-height:8.8px;color:#222;font-weight:normal;white-space:pre;transform-origin:0 0;-webkit-text-stroke:0.15px currentColor;-webkit-text-stroke:0.05px #222;">Building configuration: ITM_printf_TG - Debug</span>
<span id="t31" style="position:absolute;left:28.5px;top:681.32px;font-family:'Liberation Sans', sans-serif;font-size:8.8px;line-height:8.8px;color:#222;font-weight:normal;white-space:pre;transform-origin:0 0;-webkit-text-stroke:0.15px currentColor;-webkit-text-stroke:0.05px #222;">Updating build tree...</span>
<span id="t32" style="position:absolute;left:28.5px;top:704.22px;font-family:'Liberation Sans', sans-serif;font-size:8.8px;line-height:8.8px;color:#222;font-weight:normal;white-space:pre;transform-origin:0 0;-webkit-text-stroke:0.15px currentColor;-webkit-text-stroke:0.05px #222;">Configuration is up-to-date.</span>
<div style="position:absolute;left:0px;top:781px;width:1064px;height:4px;background:#f0f0f0;"></div>
<div style="position:absolute;left:0px;top:784.3px;width:1064px;height:1.3px;background:#9c9c9c;"></div>
<div style="position:absolute;left:0px;top:785.6px;width:1064px;height:12.4px;background:#f0eded;"></div>
<div style="position:absolute;left:0px;top:797px;width:1064px;height:1px;background:#f6f6f6;"></div>
<span id="t33" style="position:absolute;left:2px;top:787.96px;font-family:'Liberation Sans', sans-serif;font-size:8.4px;line-height:8.4px;color:#111;font-weight:normal;white-space:pre;transform-origin:0 0;-webkit-text-stroke:0.15px currentColor;">Ready</span>
<div style="position:absolute;left:756.8px;top:786.5px;width:1px;height:10.5px;background:#d8d4d4;"></div>
<div style="position:absolute;left:848.5px;top:786.5px;width:1px;height:10.5px;background:#d8d4d4;"></div>
<div style="position:absolute;left:940px;top:786.5px;width:1px;height:10.5px;background:#d8d4d4;"></div>
<div style="position:absolute;left:974.7px;top:786.5px;width:1px;height:10.5px;background:#d8d4d4;"></div>
<div style="position:absolute;left:995.7px;top:786.5px;width:1px;height:10.5px;background:#d8d4d4;"></div>
<div style="position:absolute;left:1019.8px;top:786.5px;width:1px;height:10.5px;background:#d8d4d4;"></div>
<div style="position:absolute;left:1041px;top:786.5px;width:1px;height:10.5px;background:#d8d4d4;"></div>
<span id="t34" style="position:absolute;left:760px;top:787.96px;font-family:'Liberation Sans', sans-serif;font-size:8.4px;line-height:8.4px;color:#222;font-weight:normal;white-space:pre;transform-origin:0 0;-webkit-text-stroke:0.15px currentColor;">Errors 0, Warnings 0</span>
<span id="t35" style="position:absolute;left:852px;top:787.96px;font-family:'Liberation Sans', sans-serif;font-size:8.4px;line-height:8.4px;color:#222;font-weight:normal;white-space:pre;transform-origin:0 0;-webkit-text-stroke:0.15px currentColor;">Ln 57, Col 36</span>
<span id="t36" style="position:absolute;left:943px;top:787.96px;font-family:'Liberation Sans', sans-serif;font-size:8.4px;line-height:8.4px;color:#222;font-weight:normal;white-space:pre;transform-origin:0 0;-webkit-text-stroke:0.15px currentColor;">System</span>
<span id="t37" style="position:absolute;left:998px;top:787.96px;font-family:'Liberation Sans', sans-serif;font-size:8.4px;line-height:8.4px;color:#222;font-weight:normal;white-space:pre;transform-origin:0 0;-webkit-text-stroke:0.15px currentColor;">NUM</span>
<svg style="position:absolute;left:1045px;top:787px" width="16" height="9" viewBox="0 0 16 9"><rect width="16" height="9" fill="#e8b0b0"/><rect y="1.3" width="16" height="1.3" fill="#f6e6e6"/><rect y="3.9" width="16" height="1.3" fill="#f6e6e6"/><rect y="6.5" width="16" height="1.3" fill="#f6e6e6"/><rect width="6.5" height="4.5" fill="#3a4a90"/></svg>
<svg style="position:absolute;left:0;top:28px" width="545" height="17" viewBox="0 28 545 17">
<path d="M8.5 32.5 H13 L15.5 35 V40.5 H8.5 Z" fill="#fff" stroke="#3a3a3a" stroke-width="1"/>
<path d="M13 32.5 V35 H15.5" fill="none" stroke="#3a3a3a" stroke-width="0.9"/>
<path d="M22.3 33.8 H25.3 L26.3 34.8 H29.5 V40.3 H22.3 Z" fill="#9c9620" stroke="#1a1a1a" stroke-width="0.9"/>
<path d="M22.3 40.3 L24.6 36.6 H32.2 L29.6 40.3 Z" fill="#d8d458" stroke="#1a1a1a" stroke-width="0.9"/>
<path d="M27.5 33 Q29.5 31.2 31.3 32.6" fill="none" stroke="#222" stroke-width="0.9"/>
<rect x="30.8" y="33.3" width="1.6" height="1.6" fill="#111"/>
<rect x="38.5" y="32.4" width="8.3" height="8.3" fill="#6c6818" stroke="#111" stroke-width="1"/>
<rect x="40" y="32.6" width="5.2" height="3.6" fill="#fff"/>
<rect x="40" y="37.6" width="5" height="3" fill="#0a0a0a"/>
<rect x="44.6" y="39.2" width="1.3" height="1.3" fill="#fff"/>
<path d="M53 34.2 L55.4 31.9 H62.8 L60.4 34.2 Z" fill="#4a4a4a" stroke="#111" stroke-width="0.8"/>
<path d="M60.4 34.2 L62.8 31.9 V38.4 L60.4 40.8 Z" fill="#8a8420" stroke="#111" stroke-width="0.8"/>
<rect x="53" y="34.2" width="7.4" height="6.6" fill="#5c5814" stroke="#111" stroke-width="0.9"/>
<rect x="54.6" y="35.3" width="4.3" height="2.4" fill="#fff"/>
<path d="M74.6 34.4 L75.8 32.4 H80.6 L81.8 34.4" fill="#c8c8c8" stroke="#333" stroke-width="0.9"/>
<path d="M72.6 36.6 Q72.6 34.4 74.8 34.4 H81 Q83.2 34.4 83.2 36.6 V39.8 Q83.2 41.6 81.4 41.6 H74.4 Q72.6 41.6 72.6 39.8 Z" fill="#6a6a6a" stroke="#1a1a1a" stroke-width="0.9"/>
<rect x="73.4" y="38.2" width="9" height="1.4" fill="#f4f4f4"/>
<rect x="76.6" y="38.2" width="1.8" height="1.4" fill="#c8c020"/>
<path d="M94 32.2 L97.6 38.2 M99.2 32.2 L95.6 38.2" stroke="#a8a8a8" stroke-width="1"/>
<circle cx="95" cy="40" r="1.3" fill="none" stroke="#a8a8a8" stroke-width="0.9"/>
<circle cx="98.3" cy="40" r="1.3" fill="none" stroke="#a8a8a8" stroke-width="0.9"/>
<path d="M106.5 32.5 H109.8 L111 33.7 V39 H106.5 Z" fill="#e4e4e4" stroke="#b0b0b0" stroke-width="0.9"/>
<path d="M110.5 34.6 H114.4 L116.6 36.8 V41 H110.5 Z" fill="#e4e4e4" stroke="#b0b0b0" stroke-width="0.9"/>
<rect x="122.5" y="33.4" width="7.2" height="7.4" fill="#9a9a9a" stroke="#8a8a8a" stroke-width="0.8"/>
<rect x="124.3" y="32.3" width="3.6" height="1.8" fill="#7a7a7a"/>
<path d="M126 36.2 H129.6 L131.8 38.4 V41.6 H126 Z" fill="#dedede" stroke="#a0a0a0" stroke-width="0.9"/>
<path d="M144.3 36.4 Q146.8 33.2 149 34 Q151.2 35.2 150.2 37.8 Q149.4 39.4 147.8 39.4" fill="none" stroke="#1a1aa0" stroke-width="1.5"/>
<path d="M142.2 33.6 L142.6 38.2 L146.6 37.2 Z" fill="#00006a"/>
<path d="M164.2 36.4 Q161.7 33.2 159.5 34 Q157.3 35.2 158.3 37.8 Q159.1 39.4 160.7 39.4" fill="none" stroke="#a8a8a8" stroke-width="1.3"/>
<path d="M166.2 33.6 L165.8 38.2 L161.8 37.2 Z" fill="#9a9a9a"/>
<rect x="173" y="29.7" width="116.5" height="14" fill="#fff"/>
<path d="M281.6 36 H286.4 L284 38.8 Z" fill="#000"/>
<path d="M300.6 32.3 L296.4 36.6" stroke="#9e9e9e" stroke-width="2.6"/>
<path d="M292.9 36.9 L296.2 35.4 L298.7 37.9 L297.4 41 Z" fill="#9e9e9e" stroke="#8a8a8a" stroke-width="0.6"/>
<path d="M307.6 32.3 L311.8 36.6" stroke="#9e9e9e" stroke-width="2.6"/>
<path d="M316.5 36.9 L313.2 35.4 L310.7 37.9 L312 41 Z" fill="#9e9e9e" stroke="#8a8a8a" stroke-width="0.6"/>
<path d="M322.8 32.2 L328.6 37.6" stroke="#0a1ab0" stroke-width="3.2"/>
<path d="M322.8 32.2 L328.6 37.6" stroke="#2a48ff" stroke-width="1.6"/>
<path d="M332.5 35.8 L328.6 35.2 L326.4 38.2 L327.6 41.4 Z" fill="#1a30e0" stroke="#000a80" stroke-width="0.7"/>
<path d="M331.6 38.1 V41.3 M330 39.7 H333.2" stroke="#8a2020" stroke-width="1.2"/>
<path d="M338.3 32.0 L342.2 35.6" stroke="#0a1ab0" stroke-width="2.8"/>
<path d="M344.2 34.2 L341.6 33.8 L340 36 L341 38.2 Z" fill="#1a30e0" stroke="#000a80" stroke-width="0.6"/>
<path d="M343.5 33.4 H348.2 M343.5 41 H348.2" stroke="#111" stroke-width="1.2"/>
<path d="M345.6 36 L347.4 37.8 L345.6 39.6 L343.8 37.8 Z" fill="#ff1010"/>
<rect x="353.6" y="31.8" width="9.2" height="9.6" fill="#fff" stroke="#111" stroke-width="1.1"/>
<rect x="354" y="32.2" width="8.4" height="1.6" fill="#1a2a9a"/>
<path d="M356.5 34.8 V40.4" stroke="#888" stroke-width="0.8"/>
<circle cx="360" cy="36.4" r="1.1" fill="#2a4aff"/><circle cx="360" cy="39" r="1.3" fill="#2a4aff"/>
<path d="M369.6 33.4 H375.4 L377.8 36.2 L375.4 39 H369.6 Z" fill="#6cbc6c" stroke="#0a300a" stroke-width="1"/>
<path d="M386.6 33.4 H391.6 L394 36.2 L391.6 39 H386.6 Z" fill="#6cbc6c" stroke="#0a300a" stroke-width="1"/>
<path d="M383.8 38 L386.8 35.2 V36.6 H390.2 V39.4 H386.8 V40.8 Z" fill="#00d8ff" stroke="#1010c0" stroke-width="0.9"/>
<path d="M402.2 33.4 H407.2 L409.6 36.2 L407.2 39 H402.2 Z" fill="#6cbc6c" stroke="#0a300a" stroke-width="1"/>
<path d="M405.4 38 L402.4 35.2 V36.6 H399 V39.4 H402.4 V40.8 Z" fill="#00d8ff" stroke="#1010c0" stroke-width="0.9"/>
<path d="M419.4 31.8 H423 L425 33.8 V41 H419.4 Z" fill="#f4f4f4" stroke="#222" stroke-width="1"/>
<circle cx="422" cy="35.6" r="0.9" fill="#333"/><circle cx="422" cy="38.4" r="0.9" fill="#333"/>
<path d="M414.2 38 L417.2 35.2 V36.6 H420.6 V39.4 H417.2 V40.8 Z" fill="#00d8ff" stroke="#1010c0" stroke-width="0.9"/>
<path d="M429.4 31.8 H433 L435 33.8 V41 H429.4 Z" fill="#e8e8e8" stroke="#c4c4c4" stroke-width="1"/>
<path d="M440.4 37.8 L437.2 35 V36.4 H433.8 V39.2 H437.2 V40.6 Z" fill="#b4b4b4" stroke="#a8a8a8" stroke-width="0.6"/>
<path d="M448.8 31.9 H452.2 L454 33.7 V38.5 H448.8 Z" fill="#f0f0f0" stroke="#222" stroke-width="1"/>
<path d="M450.8 34.6 V37.2" stroke="#3050c0" stroke-width="0.8"/>
<path d="M454.6 31.9 H457.4 V34.6" fill="none" stroke="#1a3aff" stroke-width="1.1"/>
<path d="M456 34 L457.4 35.6 L458.8 34 Z" fill="#1a3aff"/>
<rect x="455.2" y="37" width="1.4" height="1.2" fill="#2a3ad0"/><rect x="457.6" y="37" width="1.4" height="1.2" fill="#2a3ad0"/>
<rect x="455.2" y="39.6" width="1.4" height="1.2" fill="#2a3ad0"/><rect x="457.6" y="39.6" width="1.4" height="1.2" fill="#2a3ad0"/>
<rect x="464.4" y="31.6" width="2.6" height="3.6" fill="#f0f040" stroke="#222" stroke-width="0.7"/>
<rect x="468.2" y="31.6" width="2.6" height="3.6" fill="#40f0f0" stroke="#222" stroke-width="0.7"/>
<rect x="472" y="31.6" width="2.6" height="3.6" fill="#f040f0" stroke="#222" stroke-width="0.7"/>
<path d="M466.4 35.8 V39.6 H469.6" fill="none" stroke="#1a3aff" stroke-width="1.1"/>
<path d="M469.2 38.2 L471 39.6 L469.2 41 Z" fill="#1a3aff"/>
<rect x="471.6" y="37" width="1.4" height="1.2" fill="#2a3ad0"/><rect x="474" y="37" width="1.4" height="1.2" fill="#2a3ad0"/>
<rect x="471.6" y="39.6" width="1.4" height="1.2" fill="#2a3ad0"/><rect x="474" y="39.6" width="1.4" height="1.2" fill="#2a3ad0"/>
<path d="M479.8 32.2 H483.2 L485 34 V39 H479.8 Z" fill="#e8e8e8" stroke="#c0c0c0" stroke-width="1"/>
<path d="M483 33 L489.6 39.6 M489.6 33 L483 39.6" stroke="#b8b8b8" stroke-width="1.1"/>
<circle cx="500" cy="34.7" r="3.3" fill="#ff0000" stroke="#6a0000" stroke-width="0.6"/>
<path d="M495.4 41 L498.2 38.3 M500.6 38.3 H506 L503.2 41 H495.4" fill="none" stroke="#1a1a1a" stroke-width="1.1"/>
<path d="M518.3 32 L522.6 35.4 L518.3 38.8 Z" fill="#0a8a0a" stroke="#0a0a0a" stroke-width="0.9"/>
<path d="M514.4 41 L517.2 38.3 M521.6 38.3 H525.2 L522.4 41 H514.4" fill="none" stroke="#1a1a1a" stroke-width="1.1"/>
<path d="M533.6 32 L537.9 35.4 L533.6 38.8 Z" fill="#fafafa" stroke="#0a0a0a" stroke-width="0.9"/>
<path d="M529.4 41 L532.2 38.3 M536.6 38.3 H540.2 L537.4 41 H529.4" fill="none" stroke="#1a1a1a" stroke-width="1.1"/>
</svg>
</body></html>
